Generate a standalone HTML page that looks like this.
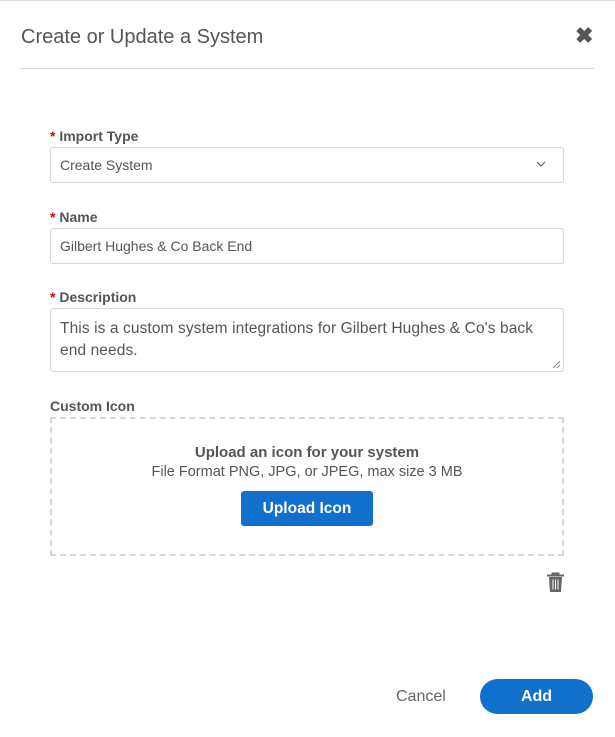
<!DOCTYPE html>
<html><head><style>
body{margin:0;width:615px;height:737px;background:#fff;font-family:"Liberation Sans",sans-serif;color:#555;position:relative;overflow:hidden}
.top{position:absolute;left:0;top:0;width:615px;height:1px;background:#ddd}
.t{position:absolute;left:21px;top:26px;font-size:20px;color:#555}
.x{position:absolute;left:575px;top:23px;font-size:22px;font-weight:bold;color:#555}
.hr{position:absolute;left:20px;top:68px;width:574px;height:1px;background:#d8d8d8}
.l{position:absolute;left:50px;font-size:14px;font-weight:bold;color:#555}
.l b{color:#d00}
.i{position:absolute;left:50px;width:511px;border:1px solid #d4d4d4;border-radius:3px;font-size:14px;color:#555;box-sizing:border-box;padding:0 9px}
.d{position:absolute;left:50px;top:417px;width:514px;height:139px;border:2px dashed #d6d6d6;box-sizing:border-box;text-align:center}
.btn{position:absolute;background:#1170cc;color:#fff;font-weight:bold;text-align:center}
</style></head><body>
<div class="top"></div>
<div class="t">Create or Update a System</div>
<div class="x">✖</div>
<div class="hr"></div>
<div class="l" style="top:128px"><b>*</b> Import Type</div>
<div class="i" style="top:147px;height:36px;width:514px;line-height:34px">Create System<svg style="position:absolute;right:17px;top:13px" width="10" height="6" viewBox="0 0 10 6"><path d="M1 1l4 4 4-4" fill="none" stroke="#666" stroke-width="1.2"/></svg></div>
<div class="l" style="top:209px"><b>*</b> Name</div>
<div class="i" style="top:228px;height:36px;width:514px;line-height:34px">Gilbert Hughes &amp; Co Back End</div>
<div class="l" style="top:289px"><b>*</b> Description</div>
<div class="i" style="top:308px;height:64px;width:514px;line-height:22px;padding-top:9px;font-size:15.5px;letter-spacing:0.1px">This is a custom system integrations for Gilbert Hughes &amp; Co's back end needs.<svg style="position:absolute;right:2px;bottom:2px" width="9" height="9"><path d="M1 8L8 1M5 8L8 5" stroke="#888"/></svg></div>
<div class="l" style="top:398px">Custom Icon</div>
<div class="d">
<div style="margin-top:25px;font-size:15px;font-weight:bold;color:#555">Upload an icon for your system</div>
<div style="margin-top:3px;font-size:14.5px;color:#555">File Format PNG, JPG, or JPEG, max size 3 MB</div>
</div>
<div class="btn" style="left:241px;top:491px;width:132px;height:35px;line-height:35px;border-radius:3px;font-size:15.5px">Upload Icon</div>
<svg style="position:absolute;left:546px;top:572px" width="19" height="21" viewBox="0 0 19 21"><path d="M1 3.5h17M6.5 3.5V1.5h6v2" stroke="#666" stroke-width="2" fill="none"/><path d="M3 5h13l-1 15H4z" fill="#666"/><path d="M7 7.5v10M9.5 7.5v10M12 7.5v10" stroke="#fff" stroke-width="1"/></svg>
<div style="position:absolute;left:396px;top:688px;font-size:16px;color:#666">Cancel</div>
<div class="btn" style="left:480px;top:679px;width:113px;height:35px;line-height:35px;border-radius:18px;font-size:16px">Add</div>
</body></html>
